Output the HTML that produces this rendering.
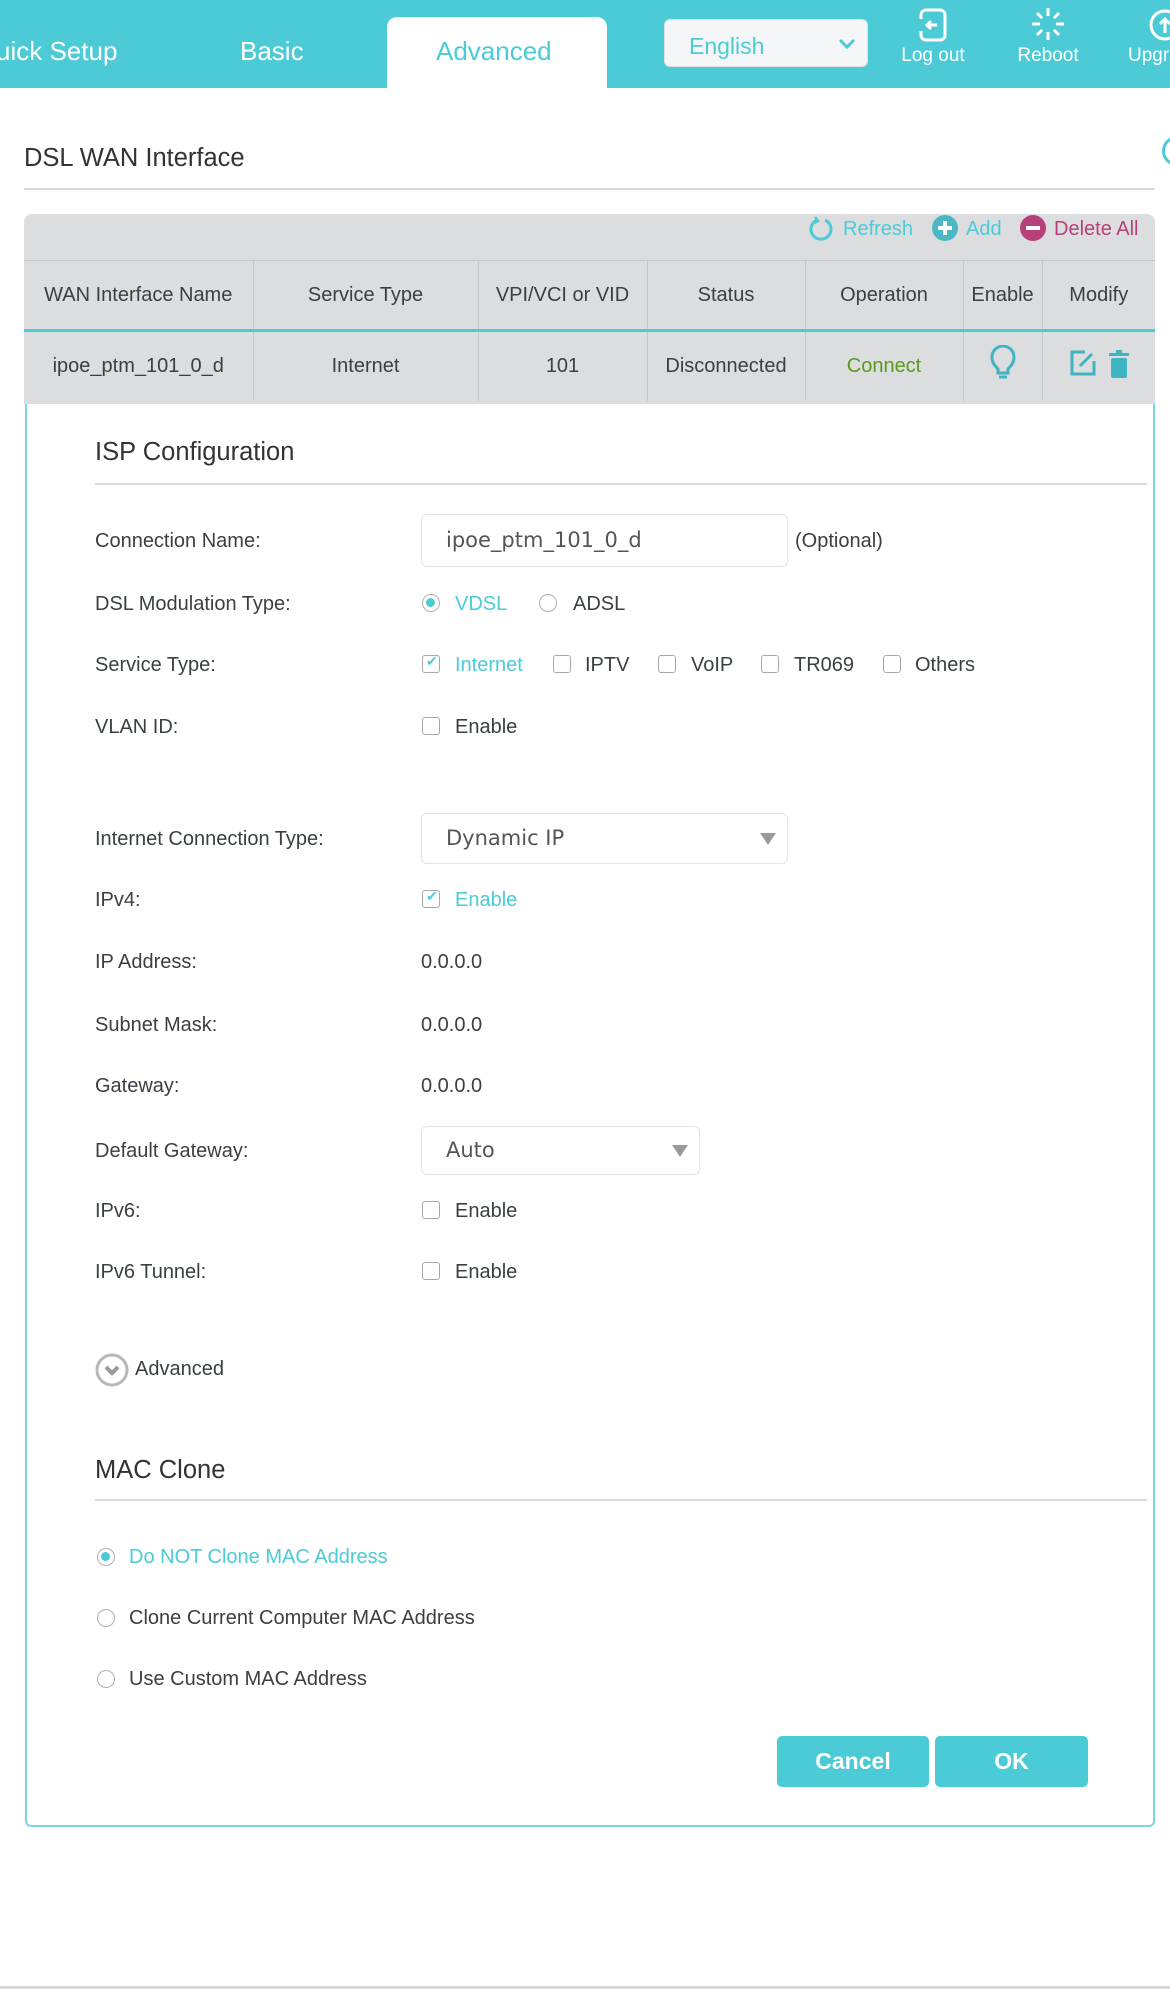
<!DOCTYPE html>
<html><head><meta charset="utf-8"><style>
*{margin:0;padding:0;box-sizing:border-box}
body{width:1170px;height:1989px;position:relative;background:#fff;font-family:"Liberation Sans",sans-serif;color:#3a3f44;overflow:hidden}
.a{position:absolute;white-space:nowrap}
.t{position:absolute;white-space:nowrap;height:24px;line-height:24px;font-size:20px}
.teal{color:#4acbd6}
.hdr{position:absolute;left:0;top:0;width:1170px;height:88px;background:#4ccbd6}
.tab{position:absolute;font-size:26px;color:#fff;line-height:30px;top:36px}
.ico{position:absolute;color:#fff;font-size:19px;text-align:center;width:90px}
.line{position:absolute;height:2px;background:#d6d8da}
.cb{position:absolute;width:18px;height:18px;border:1.5px solid #a8a8a8;border-radius:3px;background:#fff}
.rd{position:absolute;width:18px;height:18px;border:1.5px solid #b0b0b0;border-radius:50%;background:#fff}
.rd.on::after{content:"";position:absolute;left:3px;top:3px;width:9px;height:9px;border-radius:50%;background:#4acbd6}
.inp{position:absolute;border:1.5px solid #e2e4e6;border-radius:6px;background:#fff;font-family:"DejaVu Sans",sans-serif;font-size:21px;color:#555;padding-left:24px}
th,td{border-right:1.5px solid #c4c6c8;font-weight:normal;font-size:20px;text-align:center;color:#3a3f44}
h2{position:absolute;font-weight:normal;font-size:25.5px;color:#333;white-space:nowrap}
</style></head><body>
<div class="hdr"></div>
<div class="tab" style="left:-4px">uick Setup</div>
<div class="tab" style="left:240px">Basic</div>
<div class="a" style="left:387px;top:17px;width:220px;height:71px;background:#fff;border-radius:10px 10px 0 0"></div>
<div class="tab" style="left:436px;color:#4acbd6">Advanced</div>
<div class="a" style="left:664px;top:19px;width:204px;height:48px;background:#f4f6f7;border-radius:6px;border:1px solid #e0e0e0"></div>
<div class="a" style="left:689px;top:33px;font-size:23px;color:#4acbd6">English</div>
<svg class="a" style="left:838px;top:37px" width="18" height="14" viewBox="0 0 18 14"><path d="M2 3l7 7 7-7" stroke="#4acbd6" stroke-width="3" fill="none"/></svg>
<svg class="a" style="left:917px;top:7px" width="32" height="36" viewBox="0 0 32 36"><rect x="4" y="3" width="24" height="30" rx="5" fill="none" stroke="#fff" stroke-width="3"/><rect x="0" y="12" width="6" height="12" fill="#4ccbd6"/><path d="M20 18h-9M14 14l-4 4 4 4" stroke="#fff" stroke-width="3" fill="none"/></svg>
<div class="ico" style="left:888px;top:45px">Log out</div>
<svg class="a" style="left:1031px;top:7px" width="34" height="34" viewBox="0 0 34 34"><g stroke="#fff" stroke-width="3"><path d="M17 1v8M17 25v8M1 17h8M25 17h8M6 6l5 5M23 23l5 5M28 6l-5 5M11 23l-5 5"/></g></svg>
<div class="ico" style="left:1003px;top:45px">Reboot</div>
<svg class="a" style="left:1148px;top:8px" width="34" height="34" viewBox="0 0 34 34"><circle cx="17" cy="17" r="14" fill="none" stroke="#fff" stroke-width="3"/><path d="M17 25V11M12 16l5-5 5 5" stroke="#fff" stroke-width="3" fill="none"/></svg>
<div class="ico" style="left:1128px;top:45px;text-align:left;width:60px">Upgr</div>

<h2 style="left:24px;top:144px">DSL WAN Interface</h2>
<div class="line" style="left:24px;top:188px;width:1131px"></div>
<div class="a" style="left:1162px;top:136px;width:30px;height:30px;border:3px solid #4acbd6;border-radius:50%"></div>

<div class="a" style="left:24px;top:214px;width:1131px;height:190px;background:#dcdddf;border-radius:8px 8px 0 0"></div>
<svg class="a" style="left:809px;top:215px" width="26" height="28" viewBox="0 0 26 28"><path d="M8 5A10 10 0 1 0 16 5" stroke="#4acbd6" stroke-width="3" fill="none"/><path d="M6 2l3 4-4 2" stroke="#4acbd6" stroke-width="2.5" fill="none"/></svg>
<div class="t teal" style="left:843px;top:217px">Refresh</div>
<svg class="a" style="left:932px;top:215px" width="26" height="26"><circle cx="13" cy="13" r="13" fill="#4ab7c4"/><path d="M13 6v14M6 13h14" stroke="#fff" stroke-width="4"/></svg>
<div class="t teal" style="left:966px;top:217px">Add</div>
<svg class="a" style="left:1020px;top:215px" width="26" height="26"><circle cx="13" cy="13" r="13" fill="#b8407a"/><path d="M6 13h14" stroke="#fff" stroke-width="4"/></svg>
<div class="t" style="left:1054px;top:217px;color:#b8407a">Delete All</div>

<table class="a" style="left:24px;top:260px;width:1131px;border-collapse:collapse;background:#dcdddf;border-top:1.5px solid #c4c6c8">
<tr style="height:70px;border-bottom:3px solid #4acbd6"><th style="width:229px">WAN Interface Name</th><th style="width:225px">Service Type</th><th style="width:169px">VPI/VCI or VID</th><th style="width:158px">Status</th><th style="width:158px">Operation</th><th style="width:79px">Enable</th><th style="border-right:none">Modify</th></tr>
<tr style="height:70px"><td>ipoe_ptm_101_0_d</td><td>Internet</td><td>101</td><td>Disconnected</td><td style="color:#5a9a1a">Connect</td><td><svg width="26" height="36" viewBox="0 0 26 36"><path d="M8 24C4 20 2 17 2 12a11 11 0 0 1 22 0c0 5-2 8-6 12v4H8z" fill="none" stroke="#3fb4c2" stroke-width="3"/><path d="M9 32h8" stroke="#3fb4c2" stroke-width="3"/></svg></td><td style="border-right:none"><svg width="30" height="30" viewBox="0 0 30 30"><path d="M17 4H4v22h22V13" fill="none" stroke="#3fb4c2" stroke-width="3"/><path d="M12 18l12-12" stroke="#3fb4c2" stroke-width="3"/></svg>&nbsp;&nbsp;<svg width="20" height="28" viewBox="0 0 20 28"><rect x="0" y="3" width="20" height="3" fill="#3fb4c2"/><rect x="7" y="0" width="6" height="3" fill="#3fb4c2"/><rect x="2" y="8" width="16" height="20" rx="2" fill="#3fb4c2"/></svg></td></tr>
</table>

<div class="a" style="left:25px;top:404px;width:1130px;height:1423px;border:2px solid #7fd6df;border-top:none;border-radius:0 0 6px 6px"></div>

<h2 style="left:95px;top:438px">ISP Configuration</h2>
<div class="line" style="left:95px;top:483px;width:1052px"></div>

<div class="t" style="left:95px;top:529px">Connection Name:</div>
<div class="inp" style="left:421px;top:514px;width:367px;height:53px;line-height:50px">ipoe_ptm_101_0_d</div>
<div class="t" style="left:795px;top:529px">(Optional)</div>

<div class="t" style="left:95px;top:592px">DSL Modulation Type:</div>
<div class="rd on" style="left:422px;top:594px"></div><div class="t teal" style="left:455px;top:592px">VDSL</div>
<div class="rd" style="left:539px;top:594px"></div><div class="t" style="left:573px;top:592px">ADSL</div>

<div class="t" style="left:95px;top:653px">Service Type:</div>
<div class="cb" style="left:422px;top:655px"></div><div class="a teal" style="left:426px;top:653px;font-size:14px">✔</div><div class="t teal" style="left:455px;top:653px">Internet</div>
<div class="cb" style="left:553px;top:655px"></div><div class="t" style="left:585px;top:653px">IPTV</div>
<div class="cb" style="left:658px;top:655px"></div><div class="t" style="left:691px;top:653px">VoIP</div>
<div class="cb" style="left:761px;top:655px"></div><div class="t" style="left:794px;top:653px">TR069</div>
<div class="cb" style="left:883px;top:655px"></div><div class="t" style="left:915px;top:653px">Others</div>

<div class="t" style="left:95px;top:715px">VLAN ID:</div>
<div class="cb" style="left:422px;top:717px"></div><div class="t" style="left:455px;top:715px">Enable</div>

<div class="t" style="left:95px;top:827px">Internet Connection Type:</div>
<div class="inp" style="left:421px;top:813px;width:367px;height:51px;line-height:48px">Dynamic IP</div>
<svg class="a" style="left:760px;top:833px" width="16" height="12"><path d="M0 0h16L8 12z" fill="#999"/></svg>

<div class="t" style="left:95px;top:888px">IPv4:</div>
<div class="cb" style="left:422px;top:890px"></div><div class="a teal" style="left:426px;top:888px;font-size:14px">✔</div><div class="t teal" style="left:455px;top:888px">Enable</div>

<div class="t" style="left:95px;top:950px">IP Address:</div><div class="t" style="left:421px;top:950px">0.0.0.0</div>
<div class="t" style="left:95px;top:1013px">Subnet Mask:</div><div class="t" style="left:421px;top:1013px">0.0.0.0</div>
<div class="t" style="left:95px;top:1074px">Gateway:</div><div class="t" style="left:421px;top:1074px">0.0.0.0</div>

<div class="t" style="left:95px;top:1139px">Default Gateway:</div>
<div class="inp" style="left:421px;top:1126px;width:279px;height:49px;line-height:46px">Auto</div>
<svg class="a" style="left:672px;top:1145px" width="16" height="12"><path d="M0 0h16L8 12z" fill="#999"/></svg>

<div class="t" style="left:95px;top:1199px">IPv6:</div>
<div class="cb" style="left:422px;top:1201px"></div><div class="t" style="left:455px;top:1199px">Enable</div>
<div class="t" style="left:95px;top:1260px">IPv6 Tunnel:</div>
<div class="cb" style="left:422px;top:1262px"></div><div class="t" style="left:455px;top:1260px">Enable</div>

<svg class="a" style="left:95px;top:1353px" width="34" height="34" viewBox="0 0 34 34"><circle cx="17" cy="17" r="15" fill="#fff" stroke="#b8b8b8" stroke-width="3"/><path d="M11 14l6 6 6-6" stroke="#999" stroke-width="4" fill="none"/></svg>
<div class="t" style="left:135px;top:1357px">Advanced</div>

<h2 style="left:95px;top:1456px">MAC Clone</h2>
<div class="line" style="left:95px;top:1499px;width:1052px"></div>

<div class="rd on" style="left:97px;top:1548px"></div><div class="t teal" style="left:129px;top:1545px">Do NOT Clone MAC Address</div>
<div class="rd" style="left:97px;top:1609px"></div><div class="t" style="left:129px;top:1606px">Clone Current Computer MAC Address</div>
<div class="rd" style="left:97px;top:1670px"></div><div class="t" style="left:129px;top:1667px">Use Custom MAC Address</div>

<div class="a" style="left:777px;top:1736px;width:152px;height:51px;background:#4acbd6;border-radius:5px;color:#fff;font-weight:bold;font-size:23px;text-align:center;line-height:51px">Cancel</div>
<div class="a" style="left:935px;top:1736px;width:153px;height:51px;background:#4acbd6;border-radius:5px;color:#fff;font-weight:bold;font-size:23px;text-align:center;line-height:51px">OK</div>

<div class="a" style="left:0;top:1986px;width:1170px;height:3px;background:#d6d8da"></div>
</body></html>
